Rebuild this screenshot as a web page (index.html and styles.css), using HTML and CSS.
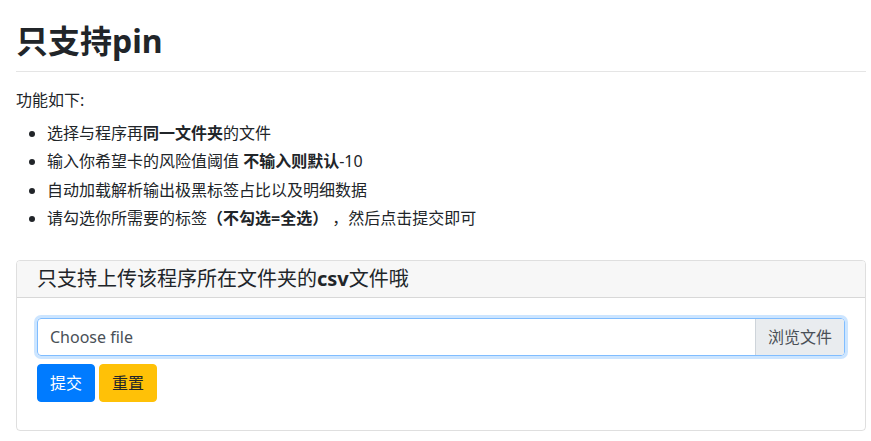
FILE: index.html
```html
<!DOCTYPE html>
<html lang="zh-CN">
<head>
<meta charset="utf-8">
<title>只支持pin</title>
<link rel="stylesheet" href="styles.css">
</head>
<body>
<div class="container">
  <h1 class="title">只支持pin</h1>
  <hr class="divider">
  <div class="intro">功能如下:</div>
  <ul class="features">
    <li>选择与程序再<b>同一文件夹</b>的文件</li>
    <li>输入你希望卡的风险值阈值 <b>不输入则默认</b>-10</li>
    <li>自动加载解析输出极黑标签占比以及明细数据</li>
    <li>请勾选你所需要的标签<b>（不勾选=全选）</b> ，然后点击提交即可</li>
  </ul>
  <div class="card">
    <div class="card-header">只支持上传该程序所在文件夹的<b>csv</b>文件哦</div>
    <div class="card-body">
      <div class="file-input">
        <span class="file-label">Choose file</span>
        <span class="file-browse">浏览文件</span>
      </div>
      <div class="actions">
        <button class="btn btn-primary" type="submit">提交</button>
        <button class="btn btn-warning" type="reset">重置</button>
      </div>
    </div>
  </div>
</div>
</body>
</html>
```
FILE: styles.css
```css
html, body {
  margin: 0;
  padding: 0;
  background: #fff;
}
body {
  font-family: "Noto Sans", "Noto Sans CJK SC", sans-serif;
  font-size: 16px;
  color: #212529;
}
.container {
  width: 850px;
  padding-left: 16px;
}
.title {
  margin: 22px 0 0;
  font-size: 32px;
  line-height: 38px;
  font-weight: 700;
}
.divider {
  margin: 11px 0 0;
  border: 0;
  border-top: 1px solid rgba(0, 0, 0, 0.1);
  height: 0;
}
.intro {
  margin-top: 14px;
  line-height: 28px;
}
.features {
  margin: 5px 0 0;
  padding-left: 31px;
}
.features li {
  line-height: 28.3px;
}
.features b {
  font-weight: 700;
}
.card {
  margin-top: 28px;
  border: 1px solid rgba(0, 0, 0, 0.125);
  border-radius: 4px;
  overflow: hidden;
}
.card-header {
  background: #f7f7f7;
  border-bottom: 1px solid rgba(0, 0, 0, 0.125);
  padding: 6px 20px;
  font-size: 20px;
  line-height: 24px;
}
.card-body {
  padding: 20px 20px 28px;
}
.file-input {
  display: flex;
  height: 38px;
  box-sizing: border-box;
  border: 1px solid #80bdff;
  border-radius: 4px;
  box-shadow: 0 0 0 3px rgba(0, 123, 255, 0.2);
  overflow: hidden;
}
.file-label {
  flex: 1;
  padding: 0 12px;
  line-height: 36px;
  color: #495057;
}
.file-browse {
  padding: 0 12px;
  line-height: 36px;
  background: #e9ecef;
  border-left: 1px solid #ced4da;
  color: #495057;
}
.actions {
  display: flex;
  gap: 4px;
  margin-top: 8px;
}
.btn {
  font-family: inherit;
  font-size: 16px;
  height: 38px;
  line-height: 24px;
  padding: 6px 12px;
  border: 1px solid transparent;
  border-radius: 4px;
}
.btn-primary {
  background: #007bff;
  border-color: #007bff;
  color: #fff;
}
.btn-warning {
  background: #ffc107;
  border-color: #ffc107;
  color: #212529;
}
```
